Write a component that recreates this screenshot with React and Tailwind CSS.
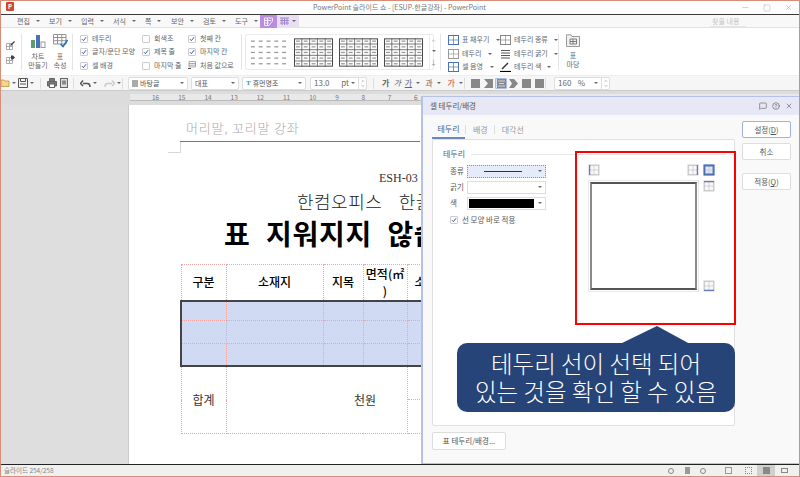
import { Minus, Square, X, HelpCircle, MessageSquare, ChevronDown, ChevronUp } from "lucide-react";

const Caret = ({ className = "" }) => (
    <span className={"inline-block shrink-0 w-0 h-0 border-l-[2px] border-r-[2px] border-t-[2px] border-l-transparent border-r-transparent border-t-[#666] " + className} />
);

const Check = ({ on, className = "" }) => (
    <span className={"w-[8px] h-[8px] shrink-0 border border-[#ccc] rounded-[1px] bg-white flex items-center justify-center " + className}>
        {on && (
            <svg width="8" height="8" viewBox="0 0 8 8">
                <path d="M1.2 4.2 L3.2 6.2 L6.8 1.6" fill="none" stroke="#2f5597" strokeWidth="1.3" />
            </svg>
        )}
    </span>
);

const CheckRow = ({ on, label, className = "" }) => (
    <div className={"flex items-center gap-[4px] h-[13.5px] whitespace-nowrap " + className}>
        <Check on={on} />
        <span>{label}</span>
    </div>
);

const CellIcon = ({ color = "#888" }) => (
    <svg width="11" height="10" viewBox="0 0 11 10" className="shrink-0">
        <rect x="0.5" y="0.5" width="10" height="9" fill="none" stroke={color} />
        <path d="M5.5 0 V10 M0 5 H11" stroke={color} strokeWidth="0.7" />
    </svg>
);

const CellPenIcon = ({ down }) => (
    <svg width="9" height="9" viewBox="0 0 9 9" className="shrink-0">
        <path d="M0.5 2.5 H6.5 V8.5 H0.5 Z M0.5 5.5 H6.5 M3.5 2.5 V8.5" fill="none" stroke="#999" strokeWidth="0.8" />
        {down ? <path d="M5 0.5 H7 L9 2.5 L7 4.5 H5 Z" fill="#444" /> : <path d="M4.5 4.5 L8.5 0.5" stroke="#444" strokeWidth="1.3" />}
    </svg>
);

// 표 스타일 미리보기
const MiniTable = ({ lined }) => {
    const xs = [0, 1, 2, 3, 4];
    return (
        <svg width="39" height="29" viewBox="0 0 40 29" className="shrink-0">
            {lined && <rect x="0.5" y="0.5" width="39" height="28" fill="none" stroke="#444" />}
            {lined && xs.slice(1).map(i => <path key={i} d={`M${i * 8} 0 V29`} stroke="#555" strokeWidth="0.8" />)}
            {lined && xs.slice(1).map(i => <path key={i} d={`M0 ${i * 5.8} H40`} stroke="#555" strokeWidth="0.8" />)}
            {xs.map(r => xs.map(c => (
                <rect key={r + "-" + c} x={c * 8 + 2} y={r * 5.8 + 2.2} width="4" height="1.3" fill="#999" />
            )))}
        </svg>
    );
};

const ToolSelect = ({ width, children, right = true }) => (
    <div style={{ width }} className="h-[13px] bg-white border border-[#ddd] rounded-[2px] flex items-center px-[3px] text-[7px] text-[#555] shrink-0">
        <div className="flex-1 flex items-center gap-[2px] whitespace-nowrap overflow-hidden">{children}</div>
        {right && <Caret />}
    </div>
);

const Spinner = () => (
    <div className="w-[8px] flex flex-col items-center border-l border-[#ddd] ml-[3px] h-full justify-center gap-[1px]">
        <ChevronUp size={4} strokeWidth={3} color="#666" />
        <ChevronDown size={4} strokeWidth={3} color="#666" />
    </div>
);

const AlignIcon = ({ selected, d }) => (
    <div className={"w-[12px] h-[11px] flex items-center justify-center rounded-[1px] " + (selected ? "bg-[#dce4f5] border border-[#a9bce6]" : "")}>
        <svg width="9" height="9" viewBox="0 0 9 9">
            <path d={d} fill="#888" />
            {selected && <path d="M1 2 H8 M2 4.5 H7 M1 7 H8" stroke="#e8edf8" strokeWidth="0.8" />}
        </svg>
    </div>
);

const BorderBtn = ({ active, line }) => (
    <div className={"w-[12px] h-[12px] border rounded-[1px] flex items-center justify-center " + (active ? "border-[#8fa6d8] bg-[#dfe6f6]" : "border-[#e6e6e6] bg-[#f8f8f8]")}>
        <svg width="10" height="10" viewBox="0 0 10 10">
            <rect x="0.5" y="0.5" width="9" height="9" fill="none" stroke="#ccc" />
            <path d="M5 0 V10 M0 5 H10" stroke="#ccc" strokeWidth="0.8" />
            <path d={line} stroke="#4f6fb5" strokeWidth={active ? 1.4 : 1.1} fill="none" />
        </svg>
    </div>
);

const DialogBtn = ({ children, primary, className = "" }) => (
    <div className={"w-[49px] h-[17px] bg-white rounded-[2px] flex items-center justify-center text-[7.5px] text-[#555] border " + (primary ? "border-[#9db2e2]" : "border-[#ddd]") + " " + className}>
        {children}
    </div>
);

const menus = [["편집", 32], ["보기", 32], ["입력", 32], ["서식", 32], ["쪽", 26], ["보안", 32], ["검토", 32], ["도구", 32]];
const rulerNums = [16, 15, 14, 13, 12, 11, 10, 9, 8, 7, 6];
const tdBase = "border border-dotted border-[#f0a5a5] p-0";
const blueFirst = " [border-left-style:solid] border-l-2 border-l-[#444]";

export default function App() {
    return (
        <div className="relative w-[800px] h-[477px] overflow-hidden flex flex-col bg-white border-x border-[#d98c78] font-['Noto_Sans_CJK_KR',sans-serif] text-[#555]">
            {/* 제목 표시줄 */}
            <div className="h-[15px] shrink-0 border-t border-[#d98c78] border-b border-b-[#3a3a3a] bg-white relative flex items-center justify-center text-[7px] text-[#777]">
                <div className="absolute left-[5px] top-[1px] w-[8px] h-[9px] bg-[#d24726] rounded-[1px] text-white text-[6px] leading-[9px] text-center font-bold">P</div>
                <span className="-ml-[1px]">PowerPoint 슬라이드 쇼 - [ESUP-한글강좌] - PowerPoint</span>
                <div className="absolute right-[6px] top-[2px] flex items-center gap-[13px] text-[#888]">
                    <Minus size={9} strokeWidth={1} />
                    <Square size={8} strokeWidth={1} />
                    <X size={9} strokeWidth={1} />
                </div>
            </div>

            {/* 메뉴 탭 */}
            <div className="h-[13px] shrink-0 bg-[#f8f8f8] border-b border-[#e2e2e2] flex items-center pl-[16px] text-[7px] text-[#666]">
                {menus.map(([menu, width]) => (
                    <div key={menu} style={{ width }} className="flex items-center gap-[6px] whitespace-nowrap">
                        <span>{menu}</span><Caret />
                    </div>
                ))}
                <div className="w-[17px] h-[13px] -ml-[7px] bg-[#b78ee0] flex items-center justify-center">
                    <svg width="9" height="9" viewBox="0 0 9 9"><path d="M0.5 1 H8.5 V4 L5 8.5 H0.5 Z M0.5 3.5 H7 M0.5 6 H5 M3.5 1 V8" stroke="#fff" strokeWidth="0.8" fill="none" /></svg>
                </div>
                <div className="w-[22px] h-[13px] bg-[#e8dff5] flex items-center justify-center gap-[3px]">
                    <svg width="9" height="8" viewBox="0 0 9 8"><path d="M0 1 H9 M0 3.5 H9 M0 6 H9 M2 1 V8 M4.5 1 V8 M7 1 V8" stroke="#9a80c4" strokeWidth="0.9" /></svg>
                    <Caret />
                </div>
                <div className="ml-auto mr-[53px] w-[36px] pl-[2px] border-b border-[#e6e6e6] text-[7px] text-[#c4c4c4] leading-[10px]">찾을 내용</div>
            </div>

            {/* 리본 */}
            <div className="h-[48px] shrink-0 bg-white border-b border-[#eee] flex items-center pt-[1px] text-[7px] text-[#666] leading-[13.5px]">
                <div className="w-[21px] h-[36px] border-r border-[#e4e4e4] flex flex-col items-end justify-center gap-[5px] pr-[6px]">
                    <CellPenIcon /><CellPenIcon down />
                </div>
                <div className="ml-[2px] w-[28px] flex flex-col items-center text-center leading-[9px]">
                    <svg width="15" height="14" viewBox="0 0 15 14" className="mb-[4px] shrink-0">
                        <rect x="0" y="6" width="4" height="8" fill="#5d9b6b" />
                        <rect x="5" y="1" width="4" height="13" fill="#4a72b8" />
                        <rect x="10" y="8" width="4" height="5.5" fill="#fff" stroke="#999" />
                    </svg>
                    <span className="whitespace-nowrap">차트<br />만들기</span>
                </div>
                <div className="w-[21px] h-[36px] border-r border-[#e4e4e4] pr-[4px] flex flex-col items-center text-center leading-[9px]">
                    <svg width="15" height="14" viewBox="0 0 15 14" className="mb-[4px] shrink-0">
                        <path d="M0.5 0.5 H13 V10 H0.5 Z M0.5 3.5 H13 M0.5 6.7 H13 M4.5 0.5 V10 M8.8 0.5 V10" fill="none" stroke="#888" strokeWidth="0.9" />
                        <path d="M7.5 10 L10 12.5 L14.5 6" fill="none" stroke="#2f6fc0" strokeWidth="1.6" />
                    </svg>
                    <span className="whitespace-nowrap">표<br />속성</span>
                </div>
                <div className="w-[69px] pl-[7px]">
                    <CheckRow on label="테두리" />
                    <CheckRow on label="글자/문단 모양" />
                    <CheckRow on label="셀 배경" />
                </div>
                <div className="w-[46px]">
                    <CheckRow label="회색조" />
                    <CheckRow on label="제목 줄" />
                    <CheckRow label="마지막 줄" />
                </div>
                <div className="w-[54px] border-r border-[#e4e4e4] h-[36px] flex flex-col justify-center">
                    <CheckRow on label="첫째 칸" />
                    <CheckRow on label="마지막 칸" />
                    <div className="flex items-center gap-[4px] h-[13.5px] whitespace-nowrap">
                        <svg width="8" height="9" viewBox="0 0 8 9" className="shrink-0"><path d="M1 0.5 H7.5 V6 H1 Z M1 2.5 H7.5 M1 4.2 H7.5" fill="none" stroke="#888" strokeWidth="0.7" /><path d="M0 7.5 H3" stroke="#555" /></svg>
                        <span>처음 값으로</span>
                    </div>
                </div>
                <div className="ml-[3px] w-[189px] h-[36px] border border-[#eaeaea] rounded-[2px] flex items-center pl-[3px] gap-[6px]">
                    <MiniTable />
                    <MiniTable lined />
                    <MiniTable lined />
                    <MiniTable lined />
                    <div className="ml-auto w-[8px] h-full border-l border-[#eaeaea] flex flex-col items-center justify-around text-[#999]">
                        <ChevronUp size={5} strokeWidth={3} />
                        <Caret />
                        <span className="text-[7px] leading-[7px]">↓</span>
                    </div>
                </div>
                <div className="ml-[6px] w-[60px] h-[36px] pl-[7px] border-l border-[#e4e4e4]">
                    {[["표 채우기", "#4a72b8"], ["테두리", "#999"], ["셀 음영", "#4a72b8"]].map(([label, color]) => (
                        <div key={label} className="flex items-center gap-[3px] h-[12px] mb-[1.5px] whitespace-nowrap">
                            <CellIcon color={color} /><span>{label}</span><Caret className="ml-[4px]" />
                        </div>
                    ))}
                </div>
                <div className="w-[58px] h-[36px]">
                    <div className="flex items-center gap-[3px] h-[12px] mb-[1.5px] whitespace-nowrap">
                        <CellIcon /><span>테두리 종류</span><Caret className="ml-[3px]" />
                    </div>
                    <div className="flex items-center gap-[3px] h-[12px] mb-[1.5px] whitespace-nowrap">
                        <svg width="11" height="10" viewBox="0 0 11 10" className="shrink-0"><path d="M1 1.5 H10 M1 4 H10 M1 6.5 H10 M1 9 H10" stroke="#555" /></svg>
                        <span>테두리 굵기</span><Caret className="ml-[3px]" />
                    </div>
                    <div className="flex items-center gap-[3px] h-[12px] whitespace-nowrap">
                        <svg width="11" height="10" viewBox="0 0 11 10" className="shrink-0"><path d="M2 7 L8 1" stroke="#333" strokeWidth="1.4" /><path d="M0 9.5 H11" stroke="#000" strokeWidth="1.2" /></svg>
                        <span>테두리 색</span><Caret className="ml-[3px]" />
                    </div>
                </div>
                <div className="h-[36px] w-[29px] border-l border-[#e4e4e4] flex flex-col items-center leading-[9px] text-center">
                    <svg width="14" height="13" viewBox="0 0 14 13" className="mb-[4px] shrink-0">
                        <path d="M0.5 2.5 L0.5 0.8 H5 L6 2.5 H13.5 V12.5 H0.5 Z" fill="#f0f0f0" stroke="#999" />
                        <path d="M4 5 H10.5 V10 H4 Z M4 7.5 H10.5 M7 5 V10" fill="none" stroke="#666" strokeWidth="0.8" />
                    </svg>
                    <span>표<br />마당</span>
                </div>
            </div>

            {/* 서식 도구 */}
            <div className="h-[14px] shrink-0 bg-[#f6f6f6] flex items-center text-[7px] text-[#666]">
                <div className="w-[16px] flex items-center gap-[2px]">
                    <svg width="9" height="8" viewBox="0 0 9 8" className="shrink-0"><path d="M0 1 H3 L4 2 H8 V7.5 H0 Z" fill="#f5d68c" stroke="#b98a2f" strokeWidth="0.7" /></svg>
                    <Caret />
                </div>
                <div className="w-[23px] flex items-center gap-[2px] pl-[1px]">
                    <svg width="10" height="10" viewBox="0 0 10 10" className="shrink-0"><path d="M0.5 0.5 H9.5 V9.5 H0.5 Z M2.5 0.5 V3.5 H7.5 V0.5 M2 6 H8" fill="none" stroke="#555" /></svg>
                    <Caret />
                </div>
                <div className="w-[33px] h-[11px] border-l border-[#ddd] flex items-center gap-[3px] pl-[6px]">
                    <svg width="10" height="10" viewBox="0 0 10 10" className="shrink-0"><path d="M2.5 3 V0.5 H7.5 V3 M2.5 8 H0.5 V3.5 H9.5 V8 H7.5" fill="#777" stroke="#666" /><rect x="2.5" y="6" width="5" height="3.5" fill="#fff" stroke="#666" /></svg>
                    <svg width="8" height="10" viewBox="0 0 8 10" className="shrink-0"><rect x="0.5" y="0.5" width="7" height="9" fill="#ddd" stroke="#666" /><rect x="2" y="2.5" width="4" height="4" fill="#888" /></svg>
                </div>
                <div className="w-[49px] h-[11px] border-l border-[#ddd] flex items-center gap-[2px] pl-[6px]">
                    <svg width="11" height="8" viewBox="0 0 11 8" className="shrink-0"><path d="M3 4.5 H7.5 C9.5 4.5 10 6 10 8 M3 1.5 L0.5 4.5 L3 7" fill="none" stroke="#555" strokeWidth="1.5" /></svg>
                    <Caret />
                    <svg width="11" height="8" viewBox="0 0 11 8" className="ml-[5px] shrink-0"><path d="M8 4.5 H3.5 C1.5 4.5 1 6 1 8 M8 1.5 L10.5 4.5 L8 7" fill="none" stroke="#ccc" strokeWidth="1.5" /></svg>
                    <Caret />
                </div>
                <div className="h-[11px] border-l border-[#ddd] flex items-center pl-[5px] gap-[3px]">
                    <ToolSelect width={60}><span className="w-[6px] h-[7px] bg-[#aaa]" />바탕글</ToolSelect>
                    <ToolSelect width={48}>대표</ToolSelect>
                    <ToolSelect width={64}><span className="text-[#2aa198] font-bold font-['Liberation_Serif',serif]">T</span>휴먼명조</ToolSelect>
                    <div className="w-[57px] h-[13px] ml-[1px] bg-white border border-[#ddd] rounded-[2px] flex items-center pl-[3px] text-[8px]">
                        <span className="flex-1">13.0</span><span className="mr-[2px]">pt</span><Caret /><Spinner />
                    </div>
                </div>
                <div className="ml-[6px] w-[91px] h-[11px] border-l border-[#ddd] flex items-center pl-[8px] gap-[4px] text-[8px] text-[#666]">
                    <span className="font-bold">가</span>
                    <span className="italic">가</span>
                    <span className="underline">가</span><Caret />
                    <span className="ml-[1px]">과</span><Caret />
                    <span className="ml-[3px] text-[#d33]">가</span><Caret />
                </div>
                <div className="h-[11px] w-[81px] border-l border-[#ddd] flex items-center gap-[1px] pl-[5px]">
                    <AlignIcon d="M0 0 H9 V9 H0 Z" />
                    <AlignIcon d="M9 0 V9 H0 L4 4.5 L0 0 Z" />
                    <AlignIcon selected d="M0 0 H9 V9 H0 Z" />
                    <AlignIcon d="M0 0 H5 L9 4.5 L5 9 H0 L3 4.5 Z" />
                    <AlignIcon d="M0 0 H9 V9 H0 Z" />
                    <AlignIcon d="M0 0 H9 V9 H0 Z" />
                </div>
                <div className="h-[11px] border-l border-[#ddd] pl-[8px] flex items-center">
                    <div className="w-[56px] h-[13px] bg-white border border-[#ddd] rounded-[2px] flex items-center pl-[3px] text-[8px]">
                        <span className="flex-1">160</span><span className="mr-[9px]">%</span><Caret /><Spinner />
                    </div>
                </div>
            </div>

            {/* 눈금자 */}
            <div className="h-[15px] shrink-0 bg-[#dcdcdc] border-t border-[#ccc] pl-[129px]">
                <div className="h-[7px] bg-[#e9e9e9] flex items-center text-[6.5px] leading-[5px] text-[#777] pl-[22px] border-b border-[#bbb] mt-[3px]">
                    {rulerNums.map(num => <span key={num} className="w-[26.2px] shrink-0">{num}</span>)}
                </div>
            </div>

            {/* 문서 영역 */}
            <div className="flex-1 min-h-0 flex bg-[#dedede]">
                <div className="w-[128px] shrink-0 border-r border-[#ccc]" />
                <div className="w-[292px] shrink-0 bg-white overflow-hidden pl-[51px]">
                    <div className="h-[37px] w-[240px] pt-[15px] pl-[6px] border-b border-[#777] text-[13px] leading-[16px] text-[#aaa] tracking-[0.8px] whitespace-nowrap font-light">
                        머리말, 꼬리말 강좌
                    </div>
                    <div className="-ml-[12px] w-[13px] h-[11px] border-r border-b border-[#d8d8d8]" />
                    <div className="w-[300px] pl-[199px] mt-[18px] text-[12px] leading-[14px] text-[#333] font-['Liberation_Serif',serif] whitespace-nowrap">ESH-03</div>
                    <div className="pl-[117px] mt-[4px] text-[18px] leading-[24px] text-[#222] font-light whitespace-nowrap tracking-[0.5px] [word-spacing:12px]">한컴오피스 한글</div>
                    <div className="pl-[44px] mt-[1px] text-[28px] leading-[38px] font-bold text-black whitespace-nowrap tracking-[0.7px] [word-spacing:8.5px]">표 지워지지 않습니다</div>
                    <table className="mt-[12px] border-collapse table-fixed w-[300px] text-[12px] text-[#333] text-center">
                        <colgroup>
                            <col className="w-[45px]" />
                            <col className="w-[97px]" />
                            <col className="w-[40px]" />
                            <col className="w-[44px]" />
                            <col />
                        </colgroup>
                        <tbody>
                            <tr className="h-[36px] font-medium text-black">
                                <td className={tdBase}>구분</td>
                                <td className={tdBase}>소재지</td>
                                <td className={tdBase}>지목</td>
                                <td className={tdBase + " leading-[17px]"}>면적(㎡<br />)</td>
                                <td className={tdBase + " text-left pl-[7px]"}>소유자</td>
                            </tr>
                            <tr className="h-[20px] bg-[#d0daf3]">
                                <td className={tdBase + " [border-top-style:solid] border-t-[#444] border-t-2" + blueFirst} />
                                <td className={tdBase + " [border-top-style:solid] border-t-[#444] border-t-2"} />
                                <td className={tdBase + " [border-top-style:solid] border-t-[#444] border-t-2"} />
                                <td className={tdBase + " [border-top-style:solid] border-t-[#444] border-t-2"} />
                                <td className={tdBase + " [border-top-style:solid] border-t-[#444] border-t-2"} />
                            </tr>
                            <tr className="h-[23px] bg-[#d0daf3]">
                                <td className={tdBase + blueFirst} /><td className={tdBase} /><td className={tdBase} /><td className={tdBase} /><td className={tdBase} />
                            </tr>
                            <tr className="h-[22px] bg-[#d0daf3]">
                                <td className={tdBase + " [border-bottom-style:solid] border-b-[#444] border-b-2" + blueFirst} />
                                <td className={tdBase + " [border-bottom-style:solid] border-b-[#444] border-b-2"} />
                                <td className={tdBase + " [border-bottom-style:solid] border-b-[#444] border-b-2"} />
                                <td className={tdBase + " [border-bottom-style:solid] border-b-[#444] border-b-2"} />
                                <td className={tdBase + " [border-bottom-style:solid] border-b-[#444] border-b-2"} />
                            </tr>
                            <tr className="h-[34px]">
                                <td rowSpan={2} className={tdBase}>합계</td>
                                <td rowSpan={2} colSpan={3} className={tdBase + " pl-[97px]"}>천원</td>
                                <td className={tdBase} />
                            </tr>
                            <tr className="h-[34px]"><td className={tdBase} /></tr>
                        </tbody>
                    </table>
                </div>
                <div className="flex-1 bg-white" />
            </div>

            {/* 상태 표시줄 */}
            <div className="h-[13px] shrink-0 border-t border-t-[#222] border-b border-b-[#d98c78] bg-[#f0f0f0] flex items-center pl-[3px] text-[6.5px] text-[#888]">
                <span>슬라이드 254/258</span>
                <div className="ml-auto flex items-center h-full text-[#888]">
                    <div className="w-[16px] flex justify-center"><div className="w-[6px] h-[6px] rounded-full border border-[#888]" /></div>
                    <div className="w-[16px] flex justify-center"><div className="w-[5px] h-[7px] bg-[#999]" /></div>
                    <div className="w-[16px] flex justify-center"><div className="w-[6px] h-[6px] rounded-full border border-[#888]" /></div>
                    <div className="w-[22px] flex justify-center ml-[6px]"><div className="w-[7px] h-[7px] border border-[#999]" /></div>
                    <div className="w-[18px] flex justify-center"><div className="w-[7px] h-[7px] border border-dotted border-[#888]" /></div>
                    <div className="w-[18px] h-full bg-[#cfcfcf] flex justify-center items-center"><div className="w-[7px] h-[7px] bg-[#888]" /></div>
                    <div className="w-[18px] flex justify-center mr-[6px]"><div className="w-[7px] h-[5px] border border-[#888]" /></div>
                </div>
            </div>

            {/* 셀 테두리/배경 대화 상자 */}
            <div className="absolute left-[420px] top-[96px] w-[379px] h-[368px] border-l-2 border-t border-b border-[#b5c2e8] bg-[#f9f9f9] flex flex-col">
                <div className="h-[18px] shrink-0 bg-[#e6e9f5] flex items-center pl-[7px] pr-[7px] text-[7.5px] text-[#555]">
                    <span>셀 테두리/배경</span>
                    <div className="ml-auto flex items-center gap-[5px] text-[#666]">
                        <MessageSquare size={8} />
                        <HelpCircle size={8} />
                        <X size={8} />
                    </div>
                </div>
                <div className="flex flex-1 min-h-0 pl-[9px] pt-[7px]">
                    <div className="w-[303px] flex flex-col">
                        <div className="h-[17px] flex items-center text-[8px] text-[#999]">
                            <div className="w-[33px] h-full text-center leading-[13px] text-[#44618f] border-b-2 border-[#6d86c0]">테두리</div>
                            <span className="pl-[7px] -mt-[2px] border-l border-[#ddd] leading-[9px]">배경</span>
                            <span className="ml-[6px] -mt-[2px] pl-[7px] border-l border-[#ddd] leading-[9px]">대각선</span>
                        </div>
                        <div className="h-[287px] bg-white border border-[#e0e0e0] rounded-[2px] pt-[8px] pl-[10px] pr-[8px] text-[7.5px]">
                            <div className="flex items-center gap-[6px] text-[#44618f] text-[8px] h-[12px]">
                                <span className="shrink-0">테두리</span>
                                <div className="flex-1 h-[1px] bg-[#e8e8e8]" />
                            </div>
                            <div className="flex pt-[3px]">
                                <div className="w-[135px] pl-[7px] shrink-0">
                                    <div className="flex items-center h-[16px]">
                                        <span className="w-[17px]">종류</span>
                                        <div className="w-[79px] h-[13px] bg-[#e5ebfa] border border-dotted border-[#7b8fc4] flex items-center pr-[3px] pl-[16px]">
                                            <div className="flex-1 h-[1px] bg-[#333] mr-[16px]" /><Caret />
                                        </div>
                                    </div>
                                    <div className="flex items-center h-[16px]">
                                        <span className="w-[17px]">굵기</span>
                                        <div className="w-[79px] h-[13px] bg-white border border-[#ddd] flex items-center justify-end pr-[3px]"><Caret /></div>
                                    </div>
                                    <div className="flex items-center h-[16px]">
                                        <span className="w-[17px]">색</span>
                                        <div className="w-[79px] h-[13px] bg-white border border-[#ddd] flex items-center px-[1px] pr-[3px]">
                                            <div className="flex-1 h-[9px] bg-black mr-[4px]" /><Caret />
                                        </div>
                                    </div>
                                    <CheckRow on label="선 모양 바로 적용" className="mt-[1px] h-[15px]" />
                                </div>
                                <div className="ml-[10px] pt-[1px]">
                                    <div className="flex w-[127px]">
                                        <BorderBtn line="M0.7 0 V10" />
                                        <div className="ml-auto flex gap-[4px]">
                                            <BorderBtn line="M9.3 0 V10" />
                                            <BorderBtn active line="M0.7 0.7 H9.3 V9.3 H0.7 Z" />
                                        </div>
                                    </div>
                                    <div className="flex mt-[4px] w-[127px]">
                                        <div className="w-[111px] h-[112px] border border-[#e8e8e8] p-[1px]">
                                            <div className="w-full h-full bg-white border-y-2 border-y-[#555] border-x-2 border-x-[#8a8a8a]" />
                                        </div>
                                        <div className="ml-auto h-[112px] flex flex-col justify-between">
                                            <BorderBtn line="M0 0.7 H10" />
                                            <BorderBtn line="M0 9.3 H10" />
                                        </div>
                                    </div>
                                </div>
                            </div>
                        </div>
                        <div className="mt-[6px] w-[74px] h-[18px] bg-white border border-[#ddd] rounded-[2px] flex items-center justify-center text-[7.5px] text-[#555] whitespace-nowrap">표 테두리/배경...</div>
                    </div>
                    <div className="pl-[7px] -mt-[1px] flex flex-col">
                        <DialogBtn primary><span>설정(<span className="underline">D</span>)</span></DialogBtn>
                        <DialogBtn className="mt-[5px]">취소</DialogBtn>
                        <DialogBtn className="mt-[13px]"><span>적용(<span className="underline">Q</span>)</span></DialogBtn>
                    </div>
                </div>
            </div>

            {/* 빨간 강조 상자 */}
            <div className="absolute left-[574px] top-[151px] w-[161px] h-[174px] border-2 border-[#f00]" />

            {/* 말풍선 */}
            <svg className="absolute left-[619px] top-[326px]" width="70" height="18" viewBox="0 0 70 18">
                <path d="M0 18 L37 0 L70 18 Z" fill="#264478" />
            </svg>
            <div className="absolute left-[456px] top-[343px] w-[278px] h-[69px] rounded-[10px] bg-[#264478] pb-[2px] flex flex-col items-center justify-center text-white text-[23.5px] leading-[28px] whitespace-nowrap font-light">
                <span>테두리 선이 선택 되어</span>
                <span>있는 것을 확인 할 수 있음</span>
            </div>
        </div>
    );
}
